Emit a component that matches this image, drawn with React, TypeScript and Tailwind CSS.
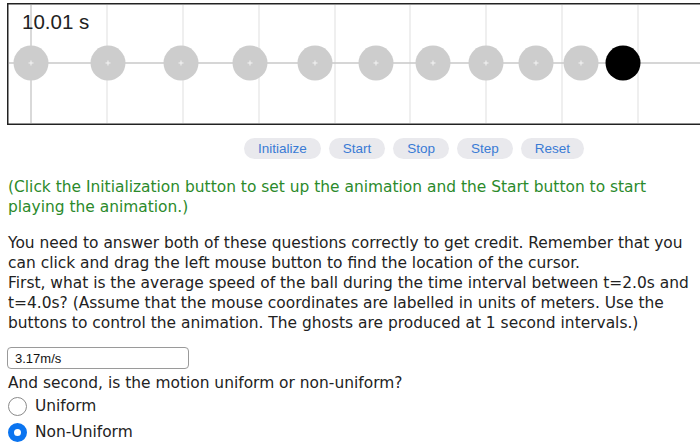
import React from 'react'

const ghosts = [31, 108, 181, 250, 315, 376, 433, 486, 536, 581]
const gridX = [107, 183, 259, 335, 410, 486, 562, 638, 714, 790]

function Canvas() {
  // offsets are relative to the box's top-left corner (7, 3)
  const ox = 7
  const oy = 3
  const cy = 63 - oy
  return (
    <svg width="816" height="122" className="block ml-[7px] mt-[3px]">
      <rect x="0.75" y="0.75" width="814.5" height="120.5" fill="white" stroke="#222" strokeWidth="1.5" />
      {gridX.map((x) => (
        <line key={x} x1={x - ox} y1="2" x2={x - ox} y2="120" stroke="#e4e4e4" strokeWidth="1.2" />
      ))}
      <line x1={31 - ox} y1="2" x2={31 - ox} y2="120" stroke="#c9c9c9" strokeWidth="1.4" />
      <line x1="2" y1={cy} x2="814" y2={cy} stroke="#c9c9c9" strokeWidth="1.6" />
      {ghosts.map((x) => (
        <g key={x}>
          <circle cx={x - ox} cy={cy} r="17.5" fill="#cdcdcd" />
          <line x1={x - ox - 2.5} y1={cy} x2={x - ox + 2.5} y2={cy} stroke="#f4f4f4" strokeWidth="1" />
          <line x1={x - ox} y1={cy - 2.5} x2={x - ox} y2={cy + 2.5} stroke="#f4f4f4" strokeWidth="1" />
        </g>
      ))}
      <circle cx={623 - ox} cy={cy} r="17.5" fill="#000" />
      <text x="15" y="26" fontSize="20.5" fill="#222" fontFamily="'Liberation Sans', Arial, sans-serif">
        10.01 s
      </text>
    </svg>
  )
}

const buttons = ['Initialize', 'Start', 'Stop', 'Step', 'Reset']

export default function App() {
  return (
    <div className="w-[700px] h-[446px] overflow-hidden bg-white font-['DejaVu_Sans',Verdana,sans-serif] text-[15.45px] leading-[20px] text-[#222]">
      <Canvas />

      {/* controls */}
      <div className="flex gap-2 ml-[244px] mt-[13px]">
        {buttons.map((b) => (
          <button
            key={b}
            className="h-[21px] px-[14px] rounded-full bg-[#e9e9ed] text-[#3a7bd5] text-[13.5px] font-['Liberation_Sans',Arial,sans-serif]"
          >
            {b}
          </button>
        ))}
      </div>

      <div className="pl-2 pt-[18px]">
        <p className="text-[#2b8a2b] whitespace-nowrap">
          (Click the Initialization button to set up the animation and the Start button to start
          <br />
          playing the animation.)
        </p>

        <p className="mt-4 whitespace-nowrap">
          You need to answer both of these questions correctly to get credit. Remember that you
          <br />
          can click and drag the left mouse button to find the location of the cursor.
          <br />
          First, what is the average speed of the ball during the time interval between t=2.0s and
          <br />
          t=4.0s? (Assume that the mouse coordinates are labelled in units of meters. Use the
          <br />
          buttons to control the animation. The ghosts are produced at 1 second intervals.)
        </p>
      </div>

      <div className="pl-[7px] pt-[14px]">
        <input
          readOnly
          value="3.17m/s"
          className="block w-[182px] h-[22px] border border-[#9a9a9a] rounded-[4px] px-[7px] text-[13px] text-[#111] font-['Liberation_Sans',Arial,sans-serif] outline-none"
        />
        <div className="mt-[4px] pl-px">And second, is the motion uniform or non-uniform?</div>
        <div className="flex items-center gap-[8px] mt-[3px] h-[20px]">
          <span className="w-[19px] h-[19px] rounded-full border-[1.5px] border-[#8a8a8a] bg-white ml-[1px]" />
          <span>Uniform</span>
        </div>
        <div className="flex items-center gap-[8px] mt-[6px] h-[20px]">
          <span className="w-[19px] h-[19px] rounded-full border-[6px] border-[#0a74f0] bg-white ml-[1px]" />
          <span>Non-Uniform</span>
        </div>
      </div>
    </div>
  )
}
